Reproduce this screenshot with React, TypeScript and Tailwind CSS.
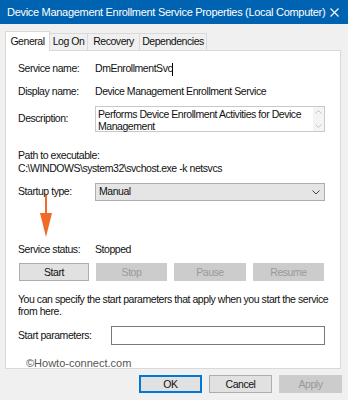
import React from 'react';

const font = { fontFamily: '"Liberation Sans", Arial, sans-serif' };

function Btn({ label, disabled, primary, className = '' }: { label: string; disabled?: boolean; primary?: boolean; className?: string }) {
  const base = 'flex items-center justify-center h-[18px] leading-none border';
  const look = disabled
    ? 'bg-[#cccccc] border-[#cccccc] text-[#9a9a9a]'
    : primary
      ? 'bg-[#e1e1e1] border-[#0078d7] border-2 text-[#111]'
      : 'bg-[#e1e1e1] border-[#adadad] text-[#111]';
  return <div className={`${base} ${look} ${className}`}>{label}</div>;
}

function Row({ label, children, className = '' }: { label: string; children?: React.ReactNode; className?: string }) {
  return (
    <div className={`flex items-center ${className}`}>
      <div className="w-[77px] shrink-0 whitespace-nowrap">{label}</div>
      {children}
    </div>
  );
}

export default function App() {
  return (
    <div className="relative w-[348px] h-[400px] bg-[#f0f0f0] flex flex-col text-[10.5px] tracking-[-0.45px] text-[#111] overflow-hidden" style={font}>
      {/* title bar */}
      <div className="h-[24px] bg-[#0063b1] flex items-center justify-between pl-[7px] pr-[9px] text-white text-[11px] tracking-[-0.3px]">
        <span className="whitespace-nowrap">Device Management Enrollment Service Properties (Local Computer)</span>
        <svg width="9" height="9" viewBox="0 0 9 9" className="shrink-0">
          <path d="M0.5 0.5 L8.5 8.5 M8.5 0.5 L0.5 8.5" stroke="white" strokeWidth="1.1" />
        </svg>
      </div>

      {/* tabs */}
      <div className="flex items-end pl-[5px] mt-[7px] h-[19px] relative z-10 whitespace-nowrap">
        <div className="h-[20px] w-[45px] bg-white border border-[#d9d9d9] border-b-0 flex items-center justify-center -mb-px">General</div>
        <div className="h-[17px] w-[38px] bg-[#f0f0f0] border border-[#d9d9d9] border-l-0 border-b-0 flex items-center justify-center">Log On</div>
        <div className="h-[17px] w-[52px] bg-[#f0f0f0] border border-[#d9d9d9] border-l-0 border-b-0 flex items-center justify-center">Recovery</div>
        <div className="h-[17px] w-[67px] bg-[#f0f0f0] border border-[#d9d9d9] border-l-0 border-b-0 flex items-center justify-center">Dependencies</div>
      </div>

      {/* panel */}
      <div className="ml-[5px] w-[336px] h-[319px] bg-white border border-[#d9d9d9] pl-[12px] pr-[15px] flex flex-col">
        <Row label="Service name:" className="h-[14px] mt-[11px]">
          <span className="flex items-center">DmEnrollmentSvc<span className="w-px h-[13px] bg-black" /></span>
        </Row>
        <Row label="Display name:" className="h-[14px] mt-[9px]">
          <span>Device Management Enrollment Service</span>
        </Row>
        <Row label="Description:" className="h-[26px] mt-[7px]">
          <div className="flex-1 h-[26px] border border-[#c8c8c8] flex">
            <div className="flex-1 pl-[2px] leading-[12px] pt-px">Performs Device Enrollment Activities for Device Management</div>
            <div className="w-[11px] bg-[#f4f4f4] flex flex-col items-center justify-between py-[3px]">
              <svg width="7" height="4" viewBox="0 0 7 4"><path d="M0.5 3.5 L3.5 0.5 L6.5 3.5" stroke="#c4c4c4" fill="none" /></svg>
              <svg width="7" height="4" viewBox="0 0 7 4"><path d="M0.5 0.5 L3.5 3.5 L6.5 0.5" stroke="#c4c4c4" fill="none" /></svg>
            </div>
          </div>
        </Row>
        <div className="mt-[17px] h-[13px] leading-[13px]">Path to executable:</div>
        <div className="h-[13px] leading-[13px]">C:\WINDOWS\system32\svchost.exe -k netsvcs</div>
        <Row label="Startup type:" className="h-[18px] mt-[8px]">
          <div className="flex-1 h-[18px] bg-[#e5e5e5] border border-[#adadad] flex items-center justify-between pl-[3px] pr-[4px]">
            <span>Manual</span>
            <svg width="8" height="5" viewBox="0 0 8 5"><path d="M0.5 0.5 L4 4 L7.5 0.5" stroke="#444" fill="none" /></svg>
          </div>
        </Row>
        <div className="mt-[32px] h-px bg-[#a0a0a0] mr-[3px]" />
        <Row label="Service status:" className="h-[14px] mt-[10px]">
          <span>Stopped</span>
        </Row>
        <div className="mt-[6px] flex gap-[7px] pl-px">
          <Btn label="Start" className="w-[70px]" />
          <Btn label="Stop" disabled className="w-[71px]" />
          <Btn label="Pause" disabled className="w-[72px]" />
          <Btn label="Resume" disabled className="w-[71px]" />
        </div>
        <div className="mt-[12px] leading-[12px] whitespace-nowrap">
          You can specify the start parameters that apply when you start the service
          <br />
          from here.
        </div>
        <div className="flex items-center mt-[9px]">
          <div className="w-[93px] shrink-0">Start parameters:</div>
          <div className="flex-1 h-[19px] border border-[#7a7a7a] bg-white" />
        </div>
        <div className="mt-[10px] pl-[8px] text-[#555] text-[11px] tracking-normal">©Howto-connect.com</div>
      </div>

      {/* bottom buttons */}
      <div className="flex justify-end gap-[7px] pr-[6px] mt-[6px]">
        <Btn label="OK" primary className="w-[63px]" />
        <Btn label="Cancel" className="w-[63px]" />
        <Btn label="Apply" disabled className="w-[63px]" />
      </div>

      {/* annotation arrow */}
      <svg className="absolute left-[38px] top-[195px]" width="16" height="44" viewBox="0 0 16 44">
        <rect x="7" y="0" width="2" height="20" fill="#f26a2a" />
        <path d="M2 18 L14 18 L8 42 Z" fill="#f26a2a" />
      </svg>
    </div>
  );
}
